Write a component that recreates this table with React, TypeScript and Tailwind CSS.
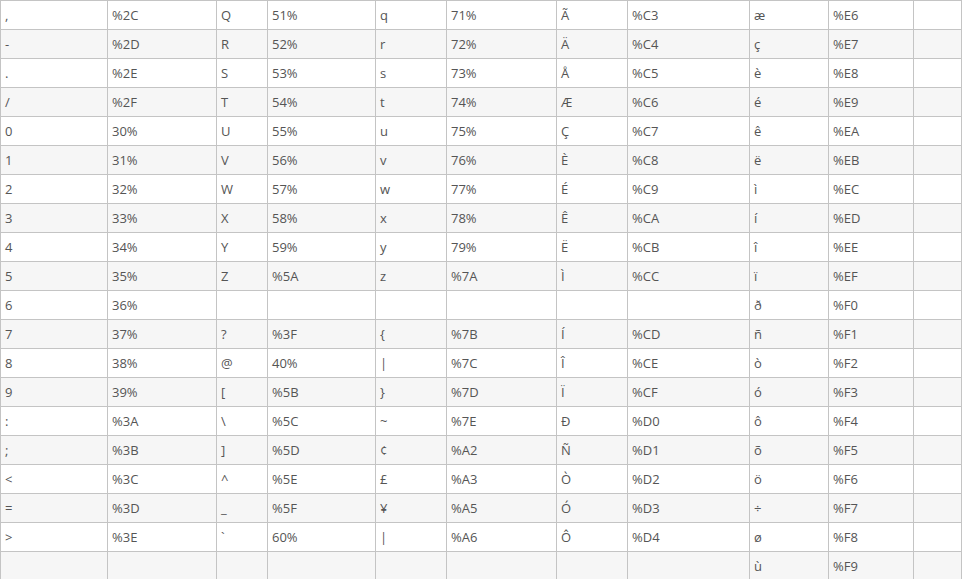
import React from "react";

const rows: string[][] = [
  [",", "%2C", "Q", "51%", "q", "71%", "Ã", "%C3", "æ", "%E6", ""],
  ["-", "%2D", "R", "52%", "r", "72%", "Ä", "%C4", "ç", "%E7", ""],
  [".", "%2E", "S", "53%", "s", "73%", "Å", "%C5", "è", "%E8", ""],
  ["/", "%2F", "T", "54%", "t", "74%", "Æ", "%C6", "é", "%E9", ""],
  ["0", "30%", "U", "55%", "u", "75%", "Ç", "%C7", "ê", "%EA", ""],
  ["1", "31%", "V", "56%", "v", "76%", "È", "%C8", "ë", "%EB", ""],
  ["2", "32%", "W", "57%", "w", "77%", "É", "%C9", "ì", "%EC", ""],
  ["3", "33%", "X", "58%", "x", "78%", "Ê", "%CA", "í", "%ED", ""],
  ["4", "34%", "Y", "59%", "y", "79%", "Ë", "%CB", "î", "%EE", ""],
  ["5", "35%", "Z", "%5A", "z", "%7A", "Ì", "%CC", "ï", "%EF", ""],
  ["6", "36%", "", "", "", "", "", "", "ð", "%F0", ""],
  ["7", "37%", "?", "%3F", "{", "%7B", "Í", "%CD", "ñ", "%F1", ""],
  ["8", "38%", "@", "40%", "|", "%7C", "Î", "%CE", "ò", "%F2", ""],
  ["9", "39%", "[", "%5B", "}", "%7D", "Ï", "%CF", "ó", "%F3", ""],
  [":", "%3A", "\\", "%5C", "~", "%7E", "Ð", "%D0", "ô", "%F4", ""],
  [";", "%3B", "]", "%5D", "¢", "%A2", "Ñ", "%D1", "õ", "%F5", ""],
  ["<", "%3C", "^", "%5E", "£", "%A3", "Ò", "%D2", "ö", "%F6", ""],
  ["=", "%3D", "_", "%5F", "¥", "%A5", "Ó", "%D3", "÷", "%F7", ""],
  [">", "%3E", "`", "60%", "|", "%A6", "Ô", "%D4", "ø", "%F8", ""],
  ["", "", "", "", "", "", "", "", "ù", "%F9", ""],
];

export default function App() {
  return (
    <div className="w-[962px] h-[579px] overflow-hidden bg-white">
      <div
        className="grid grid-cols-[107px_109px_51px_108px_71px_110px_71px_122px_79px_85px_48px] border-l border-t border-[#c4c4c4] text-[13px] text-[#555555]"
        style={{ fontFamily: '"Open Sans", "Noto Sans", sans-serif' }}
      >
        {rows.map((row, r) =>
          row.map((cell, c) => (
            <div
              key={`${r}-${c}`}
              className={`h-[29px] border-r border-b border-[#c4c4c4] pl-[4px] pt-[1px] flex items-center whitespace-nowrap ${
                r % 2 === 1 ? "bg-[#f6f6f6]" : "bg-white"
              }`}
            >
              {cell}
            </div>
          ))
        )}
      </div>
    </div>
  );
}
